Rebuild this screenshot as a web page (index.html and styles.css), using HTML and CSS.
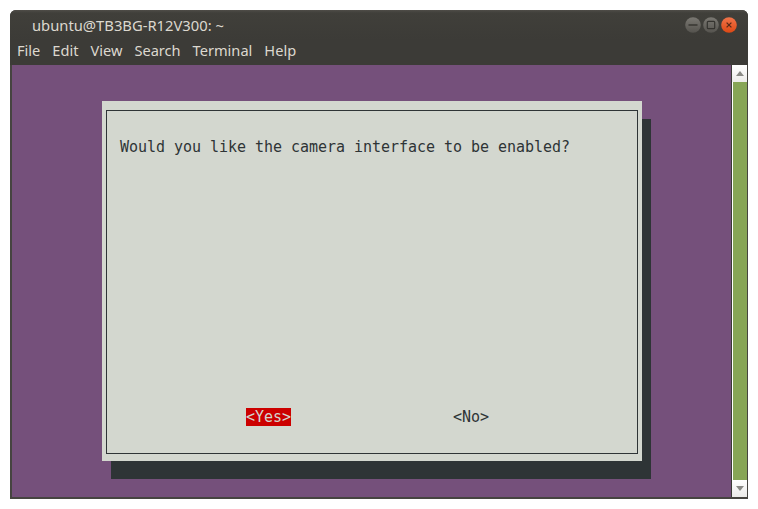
FILE: index.html
```html
<!DOCTYPE html>
<html lang="en">
<head>
<meta charset="utf-8">
<title>ubuntu@TB3BG-R12V300: ~</title>
<link rel="stylesheet" href="styles.css">
</head>
<body>
<div class="window">
  <header class="chrome">
    <div class="titlebar">
      <span class="title">ubuntu@TB3BG-R12V300: ~</span>
      <div class="controls">
        <svg class="ctl" viewBox="0 0 16 16"><defs><linearGradient id="g1" x1="0" y1="0" x2="0" y2="1"><stop offset="0" stop-color="#7a7872"/><stop offset="1" stop-color="#55534e"/></linearGradient></defs><circle cx="8" cy="8" r="7.8" fill="url(#g1)"/><path d="M3.5 8h9" stroke="#34332f" stroke-width="1.4"/></svg>
        <svg class="ctl" viewBox="0 0 16 16"><circle cx="8" cy="8" r="7.8" fill="url(#g1)"/><rect x="4.3" y="4.3" width="7.4" height="7.4" rx="1" fill="none" stroke="#34332f" stroke-width="1.2"/></svg>
        <svg class="ctl" viewBox="0 0 16 16"><defs><linearGradient id="g2" x1="0" y1="0" x2="0" y2="1"><stop offset="0" stop-color="#f0744a"/><stop offset="1" stop-color="#dd4814"/></linearGradient></defs><circle cx="8" cy="8" r="7.8" fill="url(#g2)"/><path d="M5.6 5.6l4.8 4.8M10.4 5.6l-4.8 4.8" stroke="#5a2a18" stroke-width="1.3"/></svg>
      </div>
    </div>
    <nav class="menubar">
      <span>File</span><span>Edit</span><span>View</span><span>Search</span><span>Terminal</span><span>Help</span>
    </nav>
  </header>
  <div class="body">
    <main class="terminal">
      <section class="dialog">
        <div class="frame">
          <p class="question">Would you like the camera interface to be enabled?</p>
          <div class="buttons">
            <span class="btn selected">&lt;Yes&gt;</span>
            <span class="btn">&lt;No&gt;</span>
          </div>
        </div>
      </section>
    </main>
    <aside class="scrollbar">
      <div class="step"><svg viewBox="0 0 8 5" class="arrow"><path d="M4 0l4 5H0z" fill="#8a8a86"/></svg></div>
      <div class="thumb"></div>
      <div class="step"><svg viewBox="0 0 8 5" class="arrow"><path d="M0 0h8L4 5z" fill="#8a8a86"/></svg></div>
    </aside>
  </div>
</div>
</body>
</html>
```
FILE: styles.css
```css
html, body { margin: 0; padding: 0; background: #fff; }
body { width: 758px; height: 509px; padding: 10px; box-sizing: border-box; overflow: hidden; }
.window {
  width: 738px; height: 489px; box-sizing: border-box;
  display: flex; flex-direction: column;
  background: #3c3b37; border-radius: 6px 6px 0 0;
  border: solid #464440; border-width: 0 1px 2px 2px;
}
.chrome { height: 55px; flex: none; margin: 0 -1px 0 -2px; border-radius: 6px 6px 0 0;
  background: linear-gradient(#4f4d48 0, #403f3a 3px, #3c3b37 30px); color: #dfdbd2;
  font-family: "Noto Sans", "Open Sans", sans-serif; }
.titlebar { height: 29px; display: flex; align-items: center; justify-content: space-between; padding: 0 11px 0 22px; }
.title { font-size: 14.75px; color: #dcd8cf; }
.controls { display: flex; gap: 2px; }
.ctl { width: 16px; height: 16px; display: block; }
.menubar { height: 22px; display: flex; gap: 12px; padding: 0 0 4px 7px; align-items: center; font-size: 14.6px; color: #dcd8cf; }
.body { flex: 1; display: flex; min-height: 0; }
.terminal { flex: 1; background: #75507b; padding: 36px 0 0 90px; min-width: 0; }
.dialog {
  width: 540px; height: 360px; box-sizing: border-box; padding: 9px 4px 7px 4px;
  background: #d3d7cf; box-shadow: 9px 18px 0 #2e3436;
}
.frame { height: 100%; box-sizing: border-box; border: 1px solid #2e3436; display: flex; flex-direction: column; padding: 0 13px; }
.question, .btn { font-family: "DejaVu Sans Mono", monospace; font-size: 15px; letter-spacing: -0.03px; line-height: 18px; color: #2e3436; margin: 0; white-space: pre; }
.question { margin-top: 27px; }
.buttons { margin-top: auto; margin-bottom: 27px; display: flex; padding-left: 126px; gap: 162px; }
.btn.selected { background: #cc0000; color: #d3d7cf; }
.scrollbar { width: 15px; flex: none; display: flex; flex-direction: column; background: #fff; margin-left: 1px; }
.step { height: 17px; flex: none; display: flex; align-items: center; justify-content: center; background: linear-gradient(#fff, #ecebe9); }
.arrow { width: 8px; height: 5px; display: block; }
.thumb { flex: 1; background: #87a556; margin-left: 1px; }
```
